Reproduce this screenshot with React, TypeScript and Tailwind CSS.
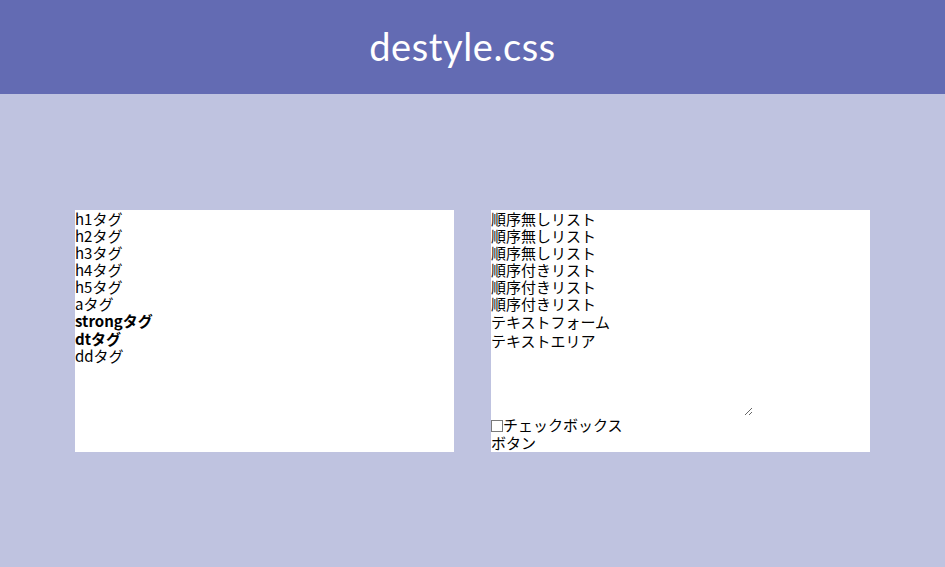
import React from "react";

const jp = { fontFamily: '"Noto Sans CJK JP", "Liberation Sans", sans-serif' };

export default function App() {
  const left = ["h1タグ", "h2タグ", "h3タグ", "h4タグ", "h5タグ", "aタグ"];
  return (
    <div className="min-h-[567px] w-full bg-[#bfc3e0] text-black" style={jp}>
      <header className="h-[94px] bg-[#636bb3] flex items-center justify-center pr-[20px]">
        <h1
          className="text-white text-[38px] leading-none pb-[2px] tracking-[0.6px]"
          style={{ fontFamily: 'Lato, "Open Sans", sans-serif' }}
        >
          destyle.css
        </h1>
      </header>
      <main className="flex justify-center gap-[37px] pt-[116px]">
        <section className="w-[379px] h-[242px] bg-white text-[15px] leading-[17px]">
          {left.map((t) => (
            <div key={t} className="h-[17px]">{t}</div>
          ))}
          <div className="h-[18px] font-bold leading-[18px]">strongタグ</div>
          <div className="h-[17px] font-bold">dtタグ</div>
          <div className="h-[17px]">ddタグ</div>
        </section>
        <section className="w-[379px] h-[242px] bg-white text-[15px] leading-[17px]">
          <ul>
            <li className="h-[17px]">順序無しリスト</li>
            <li className="h-[17px]">順序無しリスト</li>
            <li className="h-[17px]">順序無しリスト</li>
          </ul>
          <ol>
            <li className="h-[17px]">順序付きリスト</li>
            <li className="h-[17px]">順序付きリスト</li>
            <li className="h-[17px]">順序付きリスト</li>
          </ol>
          <input
            type="text"
            defaultValue="テキストフォーム"
            className="block h-[20px] w-[200px] outline-none text-[15px] leading-[20px] p-0"
            style={jp}
          />
          <textarea
            defaultValue="テキストエリア"
            className="block h-[84px] w-[262px] outline-none text-[15px] leading-[17px] p-0 m-0"
            style={jp}
          />
          <label className="flex items-center h-[17px]">
            <span className="inline-block w-[12px] h-[12px] border border-[#7a7a7a] bg-white mt-[3px]" />
            <span>チェックボックス</span>
          </label>
          <button className="block h-[19px] leading-[19px] text-[15px] p-0" style={jp}>
            ボタン
          </button>
        </section>
      </main>
    </div>
  );
}
